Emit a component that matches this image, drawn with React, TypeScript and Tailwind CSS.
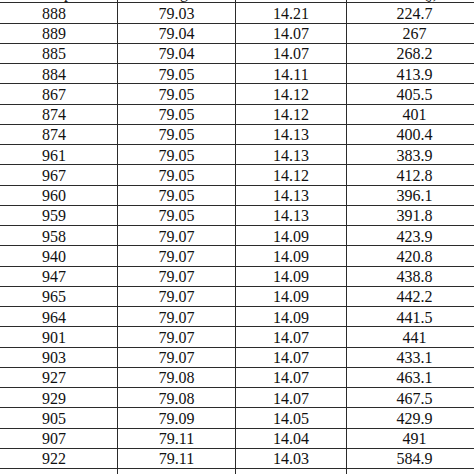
const rows: [string, string, string, string][] = [
  ["888", "79.03", "14.21", "224.7"],
  ["889", "79.04", "14.07", "267"],
  ["885", "79.04", "14.07", "268.2"],
  ["884", "79.05", "14.11", "413.9"],
  ["867", "79.05", "14.12", "405.5"],
  ["874", "79.05", "14.12", "401"],
  ["874", "79.05", "14.13", "400.4"],
  ["961", "79.05", "14.13", "383.9"],
  ["967", "79.05", "14.12", "412.8"],
  ["960", "79.05", "14.13", "396.1"],
  ["959", "79.05", "14.13", "391.8"],
  ["958", "79.07", "14.09", "423.9"],
  ["940", "79.07", "14.09", "420.8"],
  ["947", "79.07", "14.09", "438.8"],
  ["965", "79.07", "14.09", "442.2"],
  ["964", "79.07", "14.09", "441.5"],
  ["901", "79.07", "14.07", "441"],
  ["903", "79.07", "14.07", "433.1"],
  ["927", "79.08", "14.07", "463.1"],
  ["929", "79.08", "14.07", "467.5"],
  ["905", "79.09", "14.05", "429.9"],
  ["907", "79.11", "14.04", "491"],
  ["922", "79.11", "14.03", "584.9"],
  ["855", "79.12", "14.24", "516.8"],
];

const cell = "border-[1.5px] border-[#2b2b2b] text-center align-middle p-0 leading-none";

export default function App() {
  return (
    <div className="w-[474px] h-[474px] overflow-hidden bg-white">
      <table
        className="table-fixed border-collapse w-[492px] -ml-[10px] -mt-[18px] text-[16px] text-[#111]"
        style={{ fontFamily: '"Liberation Serif", "Times New Roman", serif' }}
      >
        <colgroup>
          <col className="w-[127px]" />
          <col className="w-[118px]" />
          <col className="w-[111px]" />
          <col className="w-[136px]" />
        </colgroup>
        <thead>
          <tr className="h-[20.25px]">
            <th className={`${cell} font-normal`}>Temp</th>
            <th className={`${cell} font-normal`}>Wg</th>
            <th className={`${cell} font-normal`}>Ni</th>
            <th className={`${cell} font-normal`}>
              <span className="pl-8">(j)</span>
            </th>
          </tr>
        </thead>
        <tbody>
          {rows.map((r, i) => (
            <tr key={i} className="h-[20.25px]">
              {r.map((v, j) => (
                <td key={j} className={`${cell} pt-[2px]`}>
                  {v}
                </td>
              ))}
            </tr>
          ))}
        </tbody>
      </table>
    </div>
  );
}
